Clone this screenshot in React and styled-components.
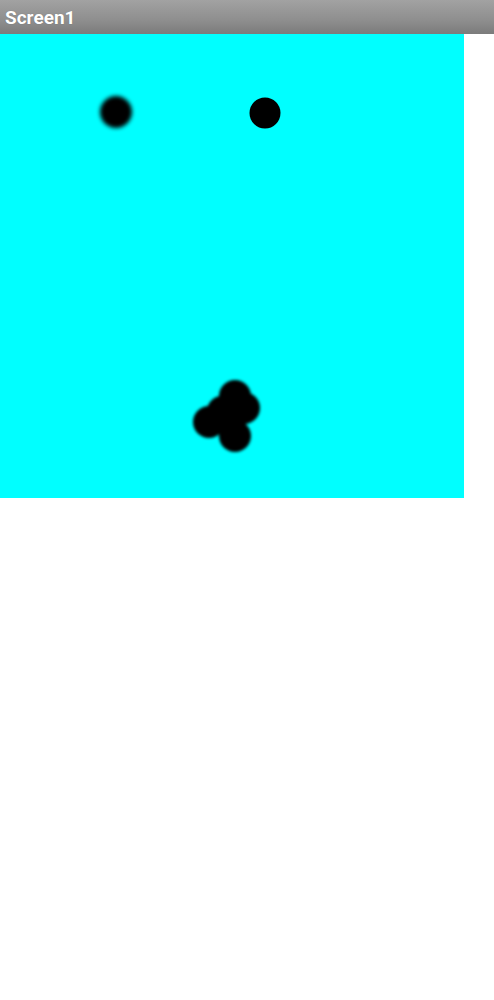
import React from "react";
import styled, { createGlobalStyle } from "styled-components";

const Global = createGlobalStyle`
  html, body { margin: 0; padding: 0; background: #fff; }
  body { font-family: Roboto, "Noto Sans", sans-serif; }
`;

const Page = styled.div`
  display: flex;
  flex-direction: column;
  width: 494px;
  min-height: 1000px;
  background: #fff;
`;

const TitleBar = styled.header`
  height: 34px;
  display: flex;
  align-items: center;
  padding: 0 5px;
  background: linear-gradient(to bottom, #a2a2a2 0%, #8e8e8e 60%, #7b7b7b 100%);
  box-sizing: border-box;
`;

const Title = styled.h1`
  margin: 0;
  font-family: Roboto, "Noto Sans", sans-serif;
  font-weight: 700;
  font-size: 19px;
  color: #fff;
  text-shadow: 0 0 1px rgba(0,0,0,0.25);
`;

const Canvas = styled.div`
  width: 464px;
  height: 464px;
  background: #00ffff;
`;

const cluster = [
  { x: 235, y: 362, r: 16 },
  { x: 244, y: 374, r: 16 },
  { x: 209, y: 388, r: 16 },
  { x: 235, y: 402, r: 16 },
  { x: 222, y: 377, r: 15 },
  { x: 230, y: 388, r: 16 },
];

export default function App() {
  return (
    <>
      <Global />
      <Page>
        <TitleBar>
          <Title>Screen1</Title>
        </TitleBar>
        <Canvas>
          <svg width="464" height="464" viewBox="0 0 464 464">
            <defs>
              <filter id="b1" x="-50%" y="-50%" width="200%" height="200%">
                <feGaussianBlur stdDeviation="2.2" />
              </filter>
              <filter id="b2" x="-50%" y="-50%" width="200%" height="200%">
                <feGaussianBlur stdDeviation="0.6" />
              </filter>
              <filter id="b3" x="-50%" y="-50%" width="200%" height="200%">
                <feGaussianBlur stdDeviation="1.8" />
              </filter>
            </defs>
            <circle cx="116" cy="78" r="16" fill="#000" filter="url(#b1)" />
            <circle cx="265" cy="79" r="15.5" fill="#000" filter="url(#b2)" />
            <g filter="url(#b3)">
              {cluster.map((d, i) => (
                <circle key={i} cx={d.x} cy={d.y} r={d.r} fill="#000" />
              ))}
            </g>
          </svg>
        </Canvas>
      </Page>
    </>
  );
}
